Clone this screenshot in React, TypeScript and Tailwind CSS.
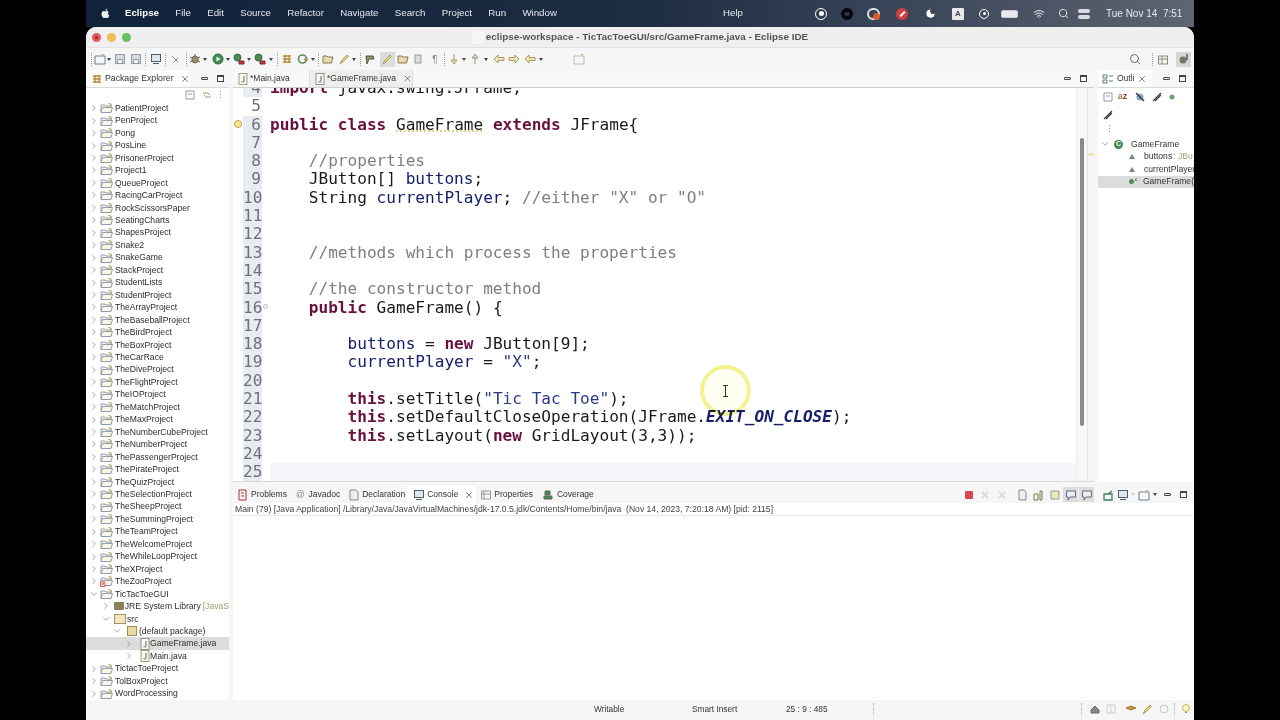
import { ReactNode } from 'react'
import { ChevronRight, ChevronDown, X, Search, Wifi, Moon } from 'lucide-react'

const sans = { fontFamily: '"Liberation Sans", Arial, sans-serif' }
const mono = { fontFamily: '"DejaVu Sans Mono", monospace' }

const projects1 = ['PatientProject', 'PenProject', 'Pong', 'PosLine', 'PrisonerProject', 'Project1', 'QueueProject', 'RacingCarProject', 'RockScissorsPaper', 'SeatingCharts', 'ShapesProject', 'Snake2', 'SnakeGame', 'StackProject', 'StudentLists', 'StudentProject', 'TheArrayProject', 'TheBaseballProject', 'TheBirdProject', 'TheBoxProject', 'TheCarRace', 'TheDiveProject', 'TheFlightProject', 'TheIOProject', 'TheMatchProject', 'TheMaxProject', 'TheNumberCubeProject', 'TheNumberProject', 'ThePassengerProject', 'ThePirateProject', 'TheQuizProject', 'TheSelectionProject', 'TheSheepProject', 'TheSummingProject', 'TheTeamProject', 'TheWelcomeProject', 'TheWhileLoopProject', 'TheXProject', 'TheZooProject']
const projects2 = ['TictacToeProject', 'TolBoxProject', 'WordProcessing']

function ProjectIcon({ error }: { error?: boolean }) {
  return (
    <svg width="14" height="12" viewBox="0 0 14 12" className="shrink-0">
      <path d="M1 3h4l1 1h5v6H1z" fill="#eef0ee" stroke="#7c8a96" strokeWidth="0.8" />
      <path d="M2.500 5.500h10L11 10.500H1z" fill="#faf7e8" stroke="#7c8a96" strokeWidth="0.8" />
      <path d="M8.500 1.500c1.800 0 3 .8 3 2.800" fill="none" stroke="#b9a45e" strokeWidth="1.200" />
      {error && <path d="M.5 7h4.500v4.500H.5z" fill="#fff" stroke="#cf4a46" strokeWidth="0.9" />}
      {error && <path d="M1.500 8l2.500 2.500M4 8l-2.500 2.500" stroke="#cf4a46" strokeWidth="0.9" />}
    </svg>
  )
}

function JavaFileIcon({ dirty }: { dirty?: boolean }) {
  return (
    <svg width="10" height="12" viewBox="0 0 10 12" className="shrink-0">
      <rect x="1" y="0.500" width="8" height="11" fill="#f7f7f2" stroke={dirty ? '#8a8a5a' : '#77806f'} strokeWidth="0.8" />
      <path d="M6 3v5c0 1-1.500 1.300-2.500.6" fill="none" stroke="#4c6a4c" strokeWidth="1" />
    </svg>
  )
}

function Chev({ open }: { open?: boolean }) {
  return open ? <ChevronDown size={10} strokeWidth={1.400} className="-mx-[0.5px] shrink-0 text-[#666]" /> : <ChevronRight size={10} strokeWidth={1.400} className="-mx-[0.5px] shrink-0 text-[#666]" />
}

function Row({ pad, open, icon, children, selected }: { pad: string; open?: boolean; icon: ReactNode; children: ReactNode; selected?: boolean }) {
  return (
    <div className={`flex h-[12.46px] items-center whitespace-nowrap ${pad} ${selected ? 'bg-[#dcdcdc]' : ''}`}>
      <Chev open={open} />
      {icon}
      {children}
    </div>
  )
}

function MinMax({ className }: { className?: string }) {
  return (
    <div className={`flex items-center gap-[9px] ${className ?? ''}`}>
      <span className="h-[3px] w-[7px] rounded-[1px] border border-[#444]" />
      <span className="h-[7px] w-[7px] border border-[#444] border-t-2" />
    </div>
  )
}

function Tb({ c = '#8d9aa8', d, active, className }: { c?: string; d: ReactNode; active?: boolean; className?: string }) {
  return (
    <span className={`flex h-[15px] w-[15px] shrink-0 items-center justify-center ${active ? 'bg-[#dcdcdc]' : ''} ${className ?? ''}`}>
      <svg width="12" height="12" viewBox="0 0 12 12" fill="none" stroke={c} strokeWidth="1">{d}</svg>
    </span>
  )
}

const Sep = ({ className }: { className?: string }) => <span className={`h-[13px] w-[1px] shrink-0 border-l border-dotted border-[#999] ${className ?? ''}`} />
const Drop = ({ className }: { className?: string }) => <span className={`h-0 w-[4px] shrink-0 border-x-[2px] border-t-[3px] border-x-transparent border-t-[#444] ${className ?? ''}`} />

const pageIcon = <><path d="M1 3h10v8H1z" fill="#f6f6f6" /><path d="M8 1l1 1 1-1" stroke="#d1a93c" /></>
const diskIcon = <><rect x="1.500" y="1.500" width="9" height="9" fill="#d5d8dc" /><rect x="3.500" y="6.500" width="5" height="4" fill="#f2f2f2" /></>
const monitorIcon = <><rect x="1.500" y="1.500" width="9" height="7" fill="#dce6ef" stroke="#4e5f6e" /><path d="M3 10.500h6" stroke="#4e5f6e" /></>
const bugIcon = <><ellipse cx="6" cy="6.500" rx="3" ry="3.500" fill="#9f8f6d" stroke="#6b5e45" /><path d="M1 4l2 1M11 4L9 5M1 9l2-1M11 9L9 8M6 1v2" stroke="#6b5e45" /></>
const runIcon = <><circle cx="6" cy="6" r="5" fill="#3c8f4e" stroke="#2d6e3b" /><path d="M4.500 3.500l4 2.500-4 2.500z" fill="#fff" stroke="none" /></>
const extIcon = <><circle cx="5.500" cy="6" r="4" stroke="#5a8a60" strokeWidth="1.600" /><path d="M7 6h4l-2 3z" fill="#b9a45e" stroke="#8c7c44" strokeWidth="0.6" /></>
const covIcon = <><circle cx="4.500" cy="4.500" r="3.500" fill="#4d8a58" stroke="#2d6e3b" /><path d="M6 8h5v3H6z" fill="#b23a3a" stroke="#8a2a2a" /></>
const pkgIcon = <><path d="M2 3h8M2 6h8M2 9h8M4 2v8M8 2v8" stroke="#b98a38" strokeWidth="1.300" /></>
const folderIcon = <path d="M1 3h4l1 1h5l-1.500 6H1z" fill="#e7d9ae" stroke="#87794d" />
const penIcon = <path d="M2 11l2-4 5-5 1.500 1.500-5 5z" fill="#e1d27b" stroke="#a8a26a" />
const arrowIcon = <path d="M1 6l4-4v2.500h6v3H5V10z" fill="#f2e6b6" stroke="#a89a66" />
const hideIcon = <><circle cx="6" cy="6" r="3.500" fill="#8aa4c0" stroke="none" /><path d="M2 2l8 8" stroke="#2e3644" strokeWidth="1.500" /></>
const slashIcon = <path d="M2 10l8-8M4 10l6-6" stroke="#3a4250" strokeWidth="1.200" />

function Code({ children }: { children?: ReactNode }) {
  return <div className="h-[18.3px] whitespace-pre">{children || ' '}</div>
}
const K = ({ children }: { children: ReactNode }) => <span className="font-bold text-[#6a1040]">{children}</span>
const C = ({ children }: { children: ReactNode }) => <span className="text-[#7c8078]">{children}</span>
const F = ({ children }: { children: ReactNode }) => <span className="text-[#14206e]">{children}</span>
const S = ({ children }: { children: ReactNode }) => <span className="text-[#2a3a86]">{children}</span>

const lines: ReactNode[] = [
  <><K>import</K> javax.swing.JFrame;</>,
  '',
  <><K>public</K> <K>class</K> <span className="underline decoration-[#d9c66a] decoration-dotted">GameFrame</span> <K>extends</K> JFrame{'{'}</>,
  '',
  <><C>{'    //properties'}</C></>,
  <>{'    JButton[] '}<F>buttons</F>;</>,
  <>{'    String '}<F>currentPlayer</F>; <C>{'//either "X" or "O"'}</C></>,
  '',
  '',
  <C>{'    //methods which process the properties'}</C>,
  '',
  <C>{'    //the constructor method'}</C>,
  <>{'    '}<K>public</K> GameFrame() {'{'}</>,
  '',
  <>{'        '}<F>buttons</F> = <K>new</K> JButton[9];</>,
  <>{'        '}<F>currentPlayer</F> = <S>"X"</S>;</>,
  '',
  <>{'        '}<K>this</K>.setTitle(<S>"Tic Tac Toe"</S>);</>,
  <>{'        '}<K>this</K>.setDefaultCloseOperation(JFrame.<span className="font-bold italic text-[#14206e]">EXIT_ON_CLOSE</span>);</>,
  <>{'        '}<K>this</K>.setLayout(<K>new</K> GridLayout(3,3));</>,
  '',
]

export default function App() {
  return (
    <div className="relative flex h-[720px] w-[1280px] justify-center overflow-hidden bg-black text-[#222]" style={sans}>
      <div className="flex w-[1108px] flex-col">
        {/* mac menu bar */}
        <div className="flex h-[27px] shrink-0 items-center bg-gradient-to-r from-[#10233a] via-[#1c2c42] to-[#5e6472] pl-[14px] text-[9.700px] text-[#e6e9ee]">
          <svg width="11" height="13" viewBox="0 0 24 24" fill="#eef1f4"><path d="M17 12.500c0-2.500 2-3.700 2.100-3.800-1.200-1.700-3-1.900-3.600-2-1.500-.2-3 .9-3.800.9s-2-.9-3.300-.9C6.700 6.700 5.100 7.700 4.200 9.200c-1.800 3.100-.5 7.700 1.300 10.300.9 1.200 1.900 2.600 3.300 2.500 1.300-.1 1.800-.8 3.400-.8s2 .8 3.400.8 2.300-1.200 3.200-2.500c1-1.400 1.400-2.800 1.400-2.900 0 0-2.200-.9-2.200-4.100zM14.800 5c.7-.9 1.200-2.100 1.100-3.300-1 0-2.300.7-3 1.500-.7.8-1.200 2-1.100 3.200 1.200.1 2.300-.6 3-1.400z" /></svg>
          <div className="ml-[14px] flex w-[432px] shrink-0 justify-between">
            <span className="font-bold text-white">Eclipse</span>
            {['File', 'Edit', 'Source', 'Refactor', 'Navigate', 'Search', 'Project', 'Run', 'Window'].map(m => <span key={m}>{m}</span>)}
          </div>
          <span className="ml-[166px] w-[19px] shrink-0">Help</span>
          <div className="ml-[73px] flex shrink-0 items-center text-[#e8eaee]">
            <span className="flex h-[12px] w-[12px] items-center justify-center rounded-full border border-white"><span className="h-[5px] w-[5px] rounded-full bg-white" /></span>
            <span className="ml-[14px] flex h-[12px] w-[12px] items-center justify-center rounded-full bg-[#05070c] text-[7px] leading-none text-[#789]">∞</span>
            <span className="relative ml-[14px] h-[12px] w-[13px] rounded-full border-2 border-[#dfe3e8]"><span className="absolute -bottom-[2px] -right-[2px] h-[7px] w-[7px] rounded-full bg-[#df5a2a]" /></span>
            <span className="ml-[16px] flex h-[12px] w-[12px] items-center justify-center rounded-full bg-[#d33d43]"><span className="h-[2px] w-[7px] -rotate-45 rounded-full bg-white" /></span>
            <Moon size={11} fill="#fff" strokeWidth={0} className="ml-[17px]" />
            <span className="ml-[16px] flex h-[12px] w-[12px] items-center justify-center rounded-[1px] bg-[#e8e8ea] text-[8px] font-bold text-[#445]">A</span>
            <span className="ml-[15px] flex h-[10px] w-[10px] items-center justify-center rounded-full border border-white"><span className="h-[3px] w-[3px] rounded-full bg-white" /></span>
            <span className="ml-[12px] h-[8px] w-[17px] rounded-[2px] border border-[#c8ccd2] bg-[#e8eaee]" />
            <Wifi size={12} className="ml-[15px]" />
            <Search size={11} className="ml-[13px]" />
            <span className="ml-[9px] flex h-[10px] w-[12px] flex-col justify-between"><span className="h-[4px] rounded-full bg-[#d8dbe0]" /><span className="h-[4px] rounded-full bg-[#d8dbe0]" /></span>
          </div>
          <span className="ml-[16px] whitespace-nowrap text-[10px]">Tue Nov 14&nbsp; 7:51</span>
        </div>

        {/* eclipse window */}
        <div className="flex min-h-0 flex-1 flex-col rounded-t-[10px] bg-[#f6f6f6]">
          <div className="relative flex h-[21px] shrink-0 items-center justify-center rounded-t-[10px] border-b border-[#e2e2e2] bg-[#efefef]">
            <div className="absolute left-[6px] top-[6px] flex gap-[6px]">
              <span className="flex h-[9px] w-[9px] items-center justify-center rounded-full bg-[#e2595a]"><span className="h-[3px] w-[3px] rounded-full bg-[#8e2a2e]" /></span>
              <span className="h-[9px] w-[9px] rounded-full bg-[#f0bd55]" />
              <span className="h-[9px] w-[9px] rounded-full bg-[#67bf62]" />
            </div>
            <span className="mr-[2px] h-[13px] w-[12px] bg-[#f6f6f6]" />
            <span className="text-[9.850px] font-bold text-[#555]">eclipse-workspace - TicTacToeGUI/src/GameFrame.java - Eclipse IDE</span>
          </div>

          {/* toolbar */}
          <div className="flex h-[22px] shrink-0 items-center pl-[5px] pr-[3px]">
            <Sep />
            <Tb d={pageIcon} c="#6f7f8d" /><Drop />
            <Tb d={diskIcon} className="ml-[1.500px]" /><Tb d={diskIcon} className="ml-[1px]" />
            <Sep className="ml-[1.500px]" /><Tb d={monitorIcon} className="ml-[2.500px]" />
            <Sep className="ml-[1.500px]" /><Tb d={<path d="M3 3l6 6M5 9l4-4" />} c="#888" className="ml-[1.500px]" />
            <Sep className="ml-[3.500px]" /><Tb d={bugIcon} className="ml-[0.500px]" /><Drop className="ml-[0.500px]" />
            <Tb d={runIcon} className="ml-[3.500px]" /><Drop className="ml-[0.500px]" />
            <Tb d={covIcon} className="ml-[1.500px]" /><Drop className="ml-[0.500px]" />
            <Tb d={covIcon} className="ml-[1.500px]" /><Drop className="ml-[1.500px]" />
            <Sep className="ml-[4px]" /><Tb d={pkgIcon} className="ml-[1.500px]" />
            <Tb d={extIcon} className="ml-[1px]" /><Drop className="ml-[0.500px]" />
            <Sep className="ml-[3px]" /><Tb d={folderIcon} className="ml-[1.500px]" />
            <Tb d={penIcon} className="ml-[1px]" /><Drop className="ml-[0.500px]" />
            <Sep className="ml-[4px]" />
            <Tb d={<path d="M2 3h7l1 3H5l-2 5z" fill="#8a9a5a" stroke="#555" />} className="ml-[1.500px]" />
            <Tb d={penIcon} active className="ml-[2px]" />
            <Tb d={folderIcon} c="#aaa" className="ml-[1px]" />
            <Tb d={<rect x="3" y="2" width="6" height="8" fill="#ddd" />} c="#999" />
            <span className="ml-[2px] flex h-[15px] w-[15px] items-center justify-center text-[10px] text-[#888]">¶</span>
            <Sep className="ml-[1.500px]" />
            <Tb d={<path d="M6 1v6M3 7h6l-3 4z" fill="#eee2a8" stroke="#a69a5c" />} className="ml-[1.500px]" /><Drop className="ml-[0.500px]" />
            <Tb d={<path d="M6 11V5M3 5h6L6 1z" fill="#e8e8d0" stroke="#8a9a7c" />} className="ml-[1.500px]" /><Drop className="ml-[1.500px]" />
            <Tb d={arrowIcon} className="ml-[3.500px]" />
            <Tb d={<g transform="matrix(-1 0 0 1 12 0)">{arrowIcon}</g>} />
            <Tb d={arrowIcon} c="#aaa" className="ml-[1px]" /><Drop className="ml-[1.500px]" />
            <Tb d={pageIcon} c="#bbb" className="ml-[28px]" />
            <div className="ml-auto flex items-center">
              <Search size={12} className="text-[#666]" />
              <span className="ml-[11px] mr-[2px] h-[13px] border-l border-dotted border-[#999]" />
              <Tb d={<path d="M1.500 3h9v8h-9zM1.500 6h9M5 3v8" />} c="#8a8a70" />
              <span className="ml-[6px] flex h-[15px] w-[15px] items-center justify-center rounded-[1px] bg-[#d6d6d6]"><svg width="12" height="12" viewBox="0 0 12 12"><circle cx="5" cy="7" r="3.500" fill="#6e7a66" /><path d="M9 1v6" stroke="#4c5a78" strokeWidth="1.500" /></svg></span>
            </div>
          </div>

          {/* main region */}
          <div className="flex min-h-0 flex-1 gap-[4px]">
            {/* package explorer */}
            <div className="flex w-[143px] shrink-0 flex-col bg-white">
              <div className="flex h-[18px] shrink-0 items-center border-b border-[#dadada] bg-[#f6f6f6] pl-[1px]">
                <div className="flex h-full w-[103px] items-center whitespace-nowrap bg-white pl-[2px] text-[8.700px] text-[#333]">
                  <Tb d={pkgIcon} />
                  <span className="ml-[1px]">Package Explorer</span>
                  <X size={10} strokeWidth={1.500} className="ml-[6px] shrink-0 text-[#333]" />
                </div>
                <MinMax className="ml-[11px]" />
              </div>
              <div className="flex h-[14px] shrink-0 items-center justify-end gap-[2px] pr-[4px]">
                <Tb d={<path d="M2 2h8v8H2zM4 5h4" />} c="#999" />
                <Tb d={<path d="M2 4h5l2 2M10 8H5L3 6" />} c="#a89a5c" />
                <span className="text-[9px] leading-none text-[#888]">⋮</span>
              </div>
              <div className="flex-1 text-[8.600px] leading-none text-[#2c2c2c]">
                {projects1.map(p => (
                  <Row key={p} pad="pl-[3px]" icon={<span className="ml-[2px] mr-[1px]"><ProjectIcon error={p === 'TheZooProject'} /></span>}>{p}</Row>
                ))}
                <Row pad="pl-[3px]" open icon={<span className="ml-[2px] mr-[1px]"><ProjectIcon /></span>}>TicTacToeGUI</Row>
                <Row pad="pl-[15px]" icon={<span className="ml-[4px] mr-[1px] h-[8px] w-[12px] rounded-[1px] bg-[#8a805a]" />}>JRE System Library <span className="ml-[2px] text-[#a09a70]">[JavaS</span></Row>
                <Row pad="pl-[15px]" open icon={<span className="ml-[4px] mr-[1px] h-[10px] w-[12px] border border-[#a3905c] bg-[#f1e6bf]" />}>src</Row>
                <Row pad="pl-[26px]" open icon={<span className="ml-[6px] mr-[2px] h-[10px] w-[10px] border border-[#a98c4e] bg-[#e9d9a6]" />}>(default package)</Row>
                <Row pad="pl-[38px]" selected icon={<span className="ml-[7px] flex"><JavaFileIcon /></span>}>GameFrame.java</Row>
                <Row pad="pl-[38px]" icon={<span className="ml-[7px] flex"><JavaFileIcon dirty /></span>}>Main.java</Row>
                {projects2.map(p => (
                  <Row key={p} pad="pl-[3px]" icon={<span className="ml-[2px] mr-[1px]"><ProjectIcon /></span>}>{p}</Row>
                ))}
              </div>
            </div>

            <div className="flex min-w-0 flex-1 flex-col gap-[4px]">
              <div className="flex min-h-0 flex-1 gap-[4px]">
                {/* editor */}
                <div className="flex h-[412px] min-w-0 flex-1 flex-col border-b border-[#d8d8d8] bg-white">
                  <div className="flex h-[18px] shrink-0 items-center border-b border-[#cfcfcf] bg-[#f8f8f8] text-[8.500px] text-[#333]">
                    <div className="flex h-full w-[76px] items-center gap-[2px] pl-[5px]"><JavaFileIcon dirty /> <span>*Main.java</span></div>
                    <div className="flex h-full w-[104px] items-center gap-[2px] border-x border-[#dcdcdc] bg-[#eeeeee] pl-[5px]"><JavaFileIcon /> <span>*GameFrame.java</span><X size={9} strokeWidth={1.500} className="ml-[5px] text-[#333]" /></div>
                    <MinMax className="ml-auto mr-[7px]" />
                  </div>
                  <div className="flex min-h-0 flex-1">
                    <div className="flex min-w-0 flex-1 overflow-hidden">
                      <div className="w-[10px] shrink-0 pl-[1px] pt-[32px]">
                        <span className="block h-[8px] w-[8px] rounded-full border border-[#b5a64c] bg-[#f3e88e]" />
                      </div>
                      <div className="-mt-[9px] w-[19px] shrink-0 bg-[#e9ebf3] pr-[1px] text-right text-[16.100px] leading-[18.300px] text-[#6e7278]" style={mono}>
                        {Array.from({ length: 22 }, (_, i) => (
                          <div key={i} className={`h-[18.3px] ${i === 1 ? '-mr-[1px] bg-white pr-[1px]' : ''}`}>{i + 4}</div>
                        ))}
                      </div>
                      <div className="-mt-[9px] w-[8px] shrink-0 pl-[1px] pt-[225px]">
                        <span className="block h-[5px] w-[5px] rounded-full border border-[#b8b8b8]" />
                      </div>
                      <div className="-mt-[9px] min-w-0 flex-1 text-[16.100px] leading-[18.300px] text-[#1a1a1a]" style={mono}>
                        {lines.map((l, i) => <Code key={i}>{l}</Code>)}
                        <div className="h-[18.3px] bg-[#f3f5fa]" />
                      </div>
                    </div>
                    <div className="flex w-[18px] shrink-0">
                      <div className="w-[11px] border-l border-[#ececec] bg-[#f7f7f7] pl-[3px] pt-[50px]">
                        <div className="h-[288px] w-[4px] rounded-full bg-[#8a8a8a]" />
                      </div>
                      <div className="w-[7px] border-l border-[#e4e4e4] bg-[#f4f4f4] pt-[65px]">
                        <div className="h-[3px] w-full bg-[#eee8b0]" />
                      </div>
                    </div>
                  </div>
                </div>

                {/* outline */}
                <div className="flex w-[96px] shrink-0 flex-col bg-white text-[8.500px] text-[#333]">
                  <div className="flex h-[18px] shrink-0 items-center border-b border-[#dadada] bg-[#f6f6f6]">
                    <div className="flex h-full w-[54px] items-center bg-white pl-[2px]">
                      <Tb d={<path d="M1 2h4v3H1zM1 7h4v3H1zM7 3h4M7 8h4" />} c="#5a7a8a" />
                      <span className="ml-[2px]">Outli</span>
                      <X size={10} strokeWidth={1.500} className="ml-[3px]" />
                    </div>
                    <MinMax className="ml-[11px]" />
                  </div>
                  <div className="flex h-[18px] items-center pl-[2px]">
                    <Tb d={<path d="M2 2h8v8H2zM4 5h4" />} c="#999" />
                    <span className="w-[15px] text-center text-[9px] font-bold text-[#884]">a<span className="text-[#a33]">z</span></span>
                    <Tb d={hideIcon} className="ml-[2px]" />
                    <Tb d={slashIcon} className="ml-[2px]" />
                    <Tb d={<circle cx="6" cy="6" r="2.500" fill="#6fa072" stroke="none" />} />
                  </div>
                  <div className="flex h-[18px] items-center pl-[2px]"><Tb d={slashIcon} /></div>
                  <div className="h-[11px] pl-[7px] text-[9px] leading-[11px] text-[#888]">⋮</div>
                  <div className="mt-[3px] flex h-[12.500px] items-center pl-[2px] text-[8.600px]">
                    <Chev open />
                    <span className="ml-[5px] mr-[8px] flex h-[9px] w-[9px] items-center justify-center rounded-full bg-[#3f8a4e] text-[7px] font-bold text-white">C</span>
                    GameFrame
                  </div>
                  <div className="flex h-[12.500px] items-center whitespace-nowrap pl-[31px] text-[8.600px]">
                    <span className="mr-[9px] h-0 w-0 border-x-[3px] border-b-[5px] border-x-transparent border-b-[#6f8f70]" />buttons<span className="ml-[1px] text-[#a09a70]">: JBu</span>
                  </div>
                  <div className="flex h-[12.500px] items-center overflow-hidden whitespace-nowrap pl-[31px] text-[8.600px]">
                    <span className="mr-[9px] h-0 w-0 shrink-0 border-x-[3px] border-b-[5px] border-x-transparent border-b-[#6f8f70]" />currentPlayer
                  </div>
                  <div className="flex h-[12.500px] items-center overflow-hidden whitespace-nowrap bg-[#dcdcdc] pl-[31px] text-[8.600px]">
                    <span className="h-[5px] w-[5px] shrink-0 rounded-full bg-[#4f8f5c]" />
                    <span className="ml-[1px] mr-[3px] w-[5px] self-start text-[5px] leading-[6px]">c</span>GameFrame(
                  </div>
                </div>
              </div>

              {/* console */}
              <div className="flex h-[214px] shrink-0 flex-col bg-white text-[8.500px] text-[#333]">
                <div className="flex h-[17px] shrink-0 items-center bg-[#f6f6f6]">
                  <span className="ml-[2px] flex w-[15px] justify-center"><Tb d={<path d="M2 1h7v10H2zM4 4h3M4 7h3" stroke="#a33" />} /></span>
                  <span className="ml-[1px]">Problems</span>
                  <span className="ml-[9px] text-[#888]">@</span>
                  <span className="ml-[4px]">Javadoc</span>
                  <span className="ml-[6px] flex"><Tb d={<path d="M2 1h6l2 2v8H2z" fill="#eee" stroke="#888" />} /></span>
                  <span className="ml-[1px]">Declaration</span>
                  <div className="ml-[2px] flex h-full w-[69px] items-center bg-white pl-[4px]">
                    <Tb d={monitorIcon} /><span className="ml-[1px]">Console</span>
                    <X size={10} strokeWidth={1.500} className="ml-[6px]" />
                  </div>
                  <span className="ml-[2px] flex"><Tb d={<path d="M1.500 2h9v8h-9zM1.500 5h9M4 2v8" />} c="#999" /></span>
                  <span className="ml-[1px]">Properties</span>
                  <span className="ml-[8px] flex"><Tb d={<path d="M3 2h5v4H3zM2 7h8v3H2z" fill="#3f8a4e" stroke="#666" />} /></span>
                  <span className="ml-[1px]">Coverage</span>
                  <div className="ml-auto flex items-center pr-[4px]">
                    <span className="h-[8px] w-[8px] rounded-[1px] bg-[#d4484e]" />
                    <Tb d={<path d="M3 3l6 6M9 3l-6 6" stroke="#ddd" strokeWidth="2" />} className="ml-[4.500px]" />
                    <Tb d={<path d="M3 3l6 6M9 3l-6 6" stroke="#ddd" strokeWidth="2" />} className="ml-[2px]" />
                    <Tb d={<path d="M3 1h5l2 2v8H3z" fill="#eee" stroke="#888" />} className="ml-[5px]" />
                    <Tb d={<path d="M2 5h4v6H2zM8 2h2v9H8z" stroke="#6a7f4a" />} className="ml-[1px]" />
                    <Tb d={<path d="M2 2h8v8H2z" fill="#eee9b8" stroke="#999" />} className="ml-[2px]" />
                    <Tb d={<path d="M1.500 2h9v6H5l-2 3V8H1.500z" fill="#e8eef4" stroke="#5a6a7a" />} active className="ml-[1px]" />
                    <Tb d={<path d="M1.500 2h9v6H5l-2 3V8H1.500z" fill="#f4e8e8" stroke="#5a6a7a" />} active className="ml-[1px]" />
                    <Tb d={<path d="M2 5h8v6H2zM6 5l4-3" stroke="#3f7f5f" strokeWidth="1.300" />} className="ml-[6px]" />
                    <Tb d={monitorIcon} c="#ccc" />
                    <Drop className="ml-[1px] border-t-[#ccc]" />
                    <Tb d={pageIcon} c="#6f7f8d" className="ml-[1.500px]" />
                    <Drop className="ml-[1.500px]" />
                    <MinMax className="ml-[7px] mr-[3px]" />
                  </div>
                </div>
                <div className="flex h-[13px] shrink-0 items-center whitespace-pre border-b border-[#e8e8e8] pl-[2px] text-[8.600px] text-[#444]">Main (79) [Java Application] /Library/Java/JavaVirtualMachines/jdk-17.0.5.jdk/Contents/Home/bin/java  (Nov 14, 2023, 7:20:18 AM) [pid: 2115]</div>
                <div className="flex-1" />
              </div>
            </div>
          </div>

          {/* status bar */}
          <div className="flex h-[20px] shrink-0 items-center pb-[2px] text-[8.300px] text-[#333]">
            <span className="ml-[508px] w-[98px]">Writable</span>
            <span className="w-[94px]">Smart Insert</span>
            <span className="w-[87px]">25 : 9 : 485</span>
            <span className="h-[12px] border-l border-dotted border-[#aaa]" />
            <div className="ml-auto flex items-center gap-[1px] pr-[1px]">
              <span className="mr-[4px] h-[12px] border-l border-dotted border-[#aaa]" />
              <Tb d={<path d="M2 7l4-4 4 4v3H2z" fill="#888" stroke="#667" />} />
              <Tb d={<path d="M2 2h8v8H2zM6 2v8" stroke="#c8d0d4" />} />
              <Tb d={<path d="M1 5l5-2 5 2-5 2z" fill="#c9963c" stroke="#a07a30" />} className="ml-[4px]" />
              <Tb d={penIcon} />
              <Tb d={<circle cx="6" cy="6" r="4" stroke="#c4c8c4" />} className="ml-[1px]" />
              <span className="mx-[2px] h-[12px] border-l border-dotted border-[#aaa]" />
              <Tb d={<><circle cx="6" cy="5" r="3.500" fill="#fbf3c4" stroke="#c9b95c" /><path d="M5 9.500h2" stroke="#888" /></>} />
            </div>
          </div>
        </div>
      </div>

      {/* presenter's cursor highlight */}
      <div className="absolute left-[700px] top-[365px] flex h-[51px] w-[51px] items-center justify-center rounded-full border-[4px] border-[#f4f290] bg-[#fffff2] mix-blend-multiply">
        <svg width="7" height="12" viewBox="0 0 7 12" fill="none" stroke="#333" strokeWidth="1"><path d="M1 .5h5M1 11.500h5M3.500 .5v11" /></svg>
      </div>
    </div>
  )
}
